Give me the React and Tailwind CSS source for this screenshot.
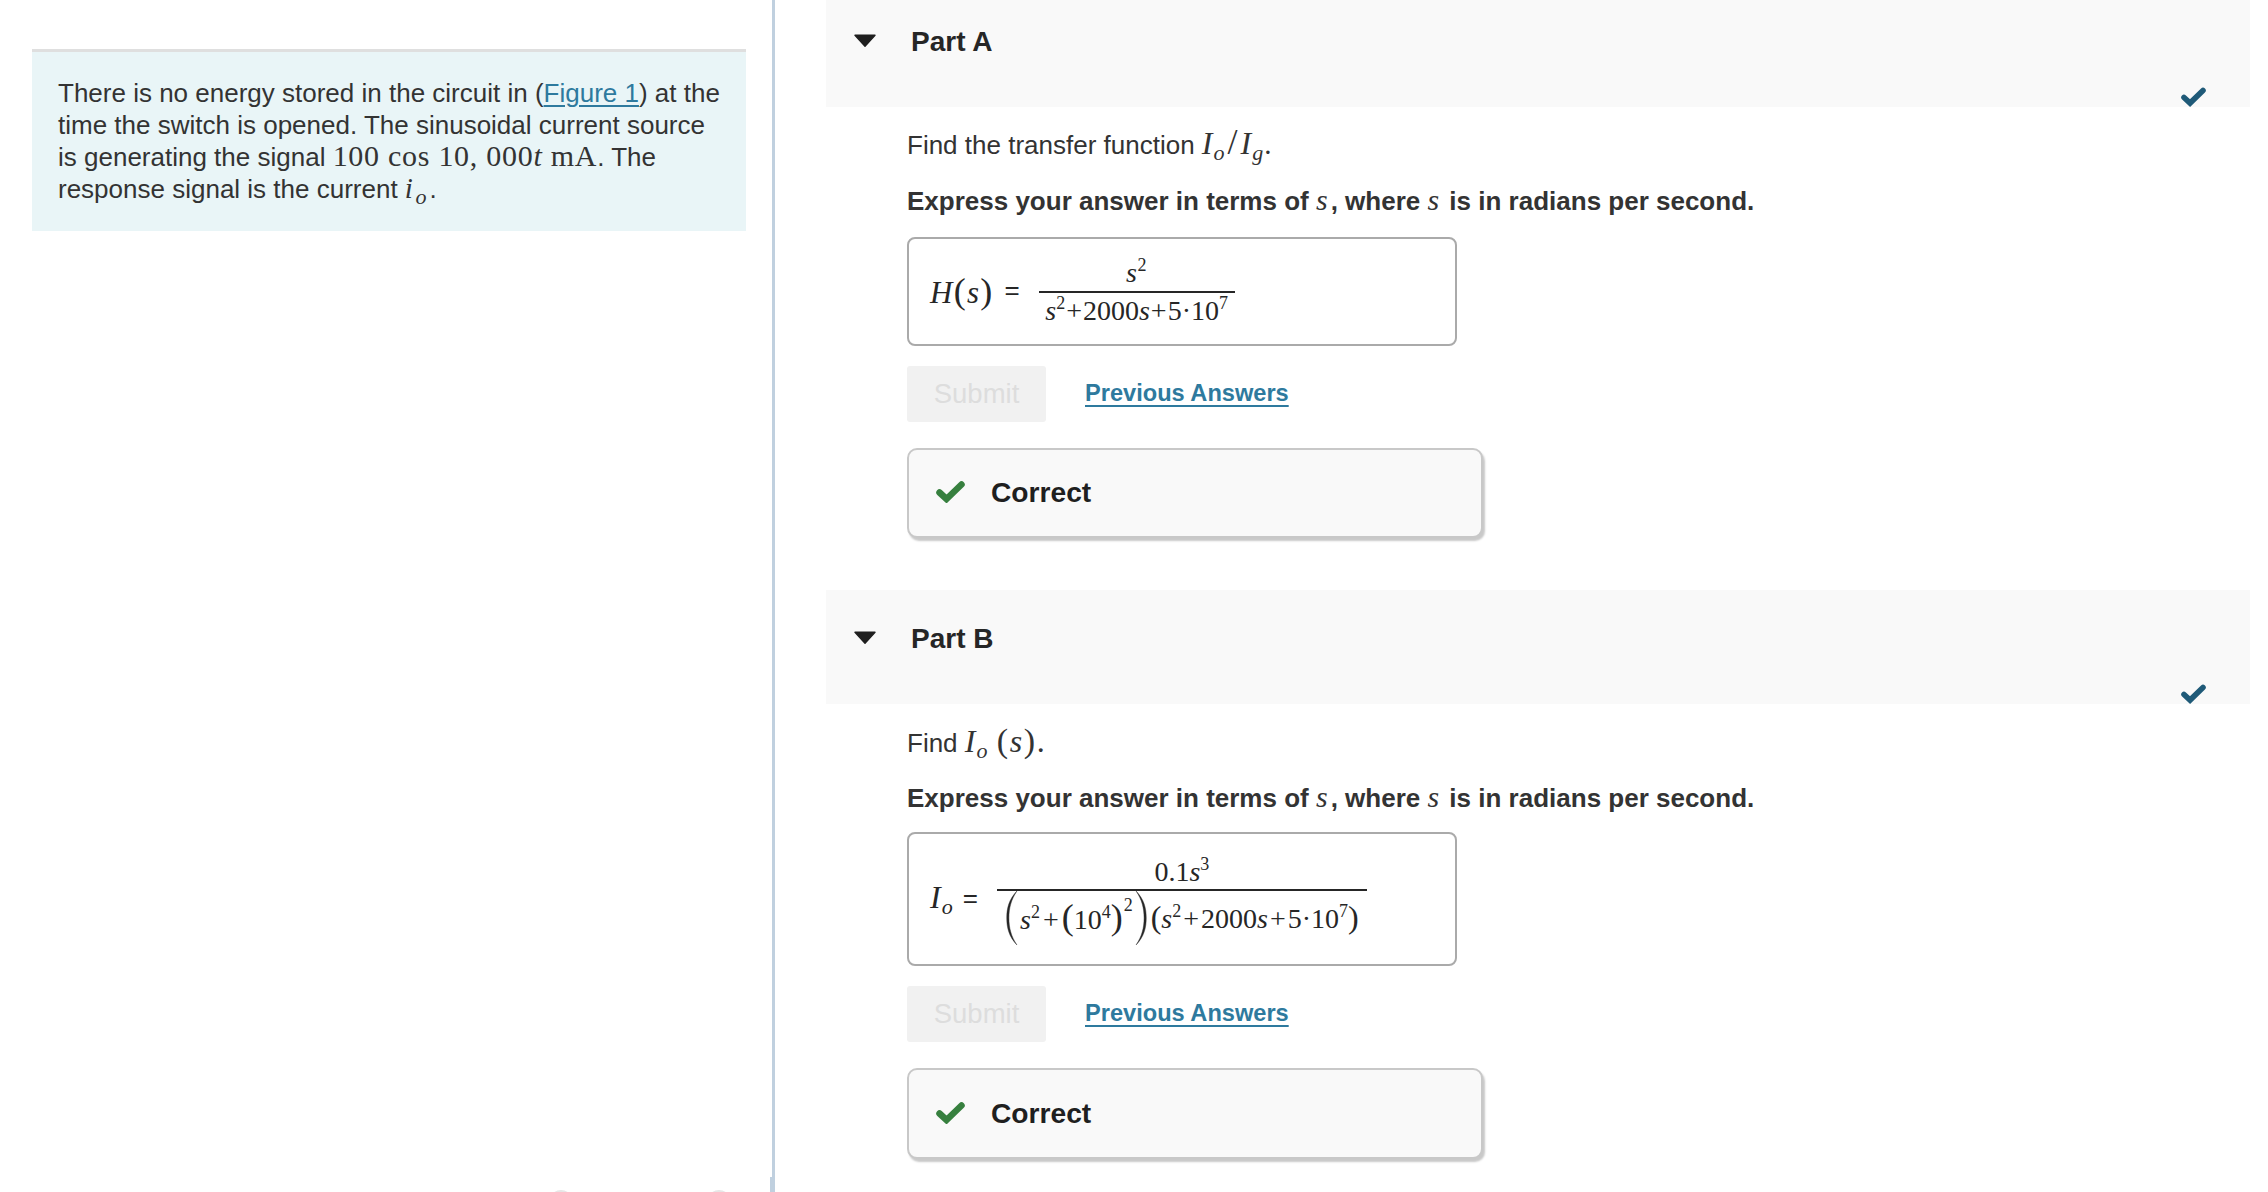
import React from "react";

const Serif = ({ children, className = "" }) => (
  <span className={`font-['Liberation_Serif',serif] leading-none ${className}`}>{children}</span>
);
const I = ({ children, className = "" }) => (
  <span className={`font-['Liberation_Serif',serif] italic leading-none ${className}`}>{children}</span>
);
const Sup = ({ children, className = "-top-[11px]" }) => (
  <span className={`relative text-[18px] leading-none ${className}`}>{children}</span>
);
const Sub = ({ children }) => (
  <span className="relative top-[6px] ml-[1px] text-[22px] leading-none italic">{children}</span>
);
const Plus = ({ className = "mx-[1px]" }) => <span className={className}>+</span>;

const Check = ({ className }) => (
  <svg viewBox="0 0 29 22" className={className} fill="none">
    <path d="M3.5 11.5 L10.5 18 L25.5 3.5" stroke="currentColor" strokeWidth="6.5" strokeLinejoin="miter" strokeLinecap="round" />
  </svg>
);

const Paren = ({ flip = false }) => (
  <svg viewBox="0 0 12 52" className={`w-[13px] h-[56px] shrink-0 ${flip ? "-scale-x-100" : ""}`} fill="none">
    <path d="M11 1 C3.5 9 1.6 17 1.6 26 C1.6 35 3.5 43 11 51 C5.6 43 3.6 35 3.6 26 C3.6 17 5.6 9 11 1 Z" fill="#262626" stroke="#262626" strokeWidth="0.4" />
  </svg>
);

function PartHeader({ title }) {
  return (
    <div className="relative h-[114px] bg-[#f9f9f9]">
      <div className="flex items-center pt-[31px] pl-[28px]">
        <svg width="22" height="13" viewBox="0 0 22 13" className="mr-[35px] -mt-[3px]">
          <path d="M1 1.2h20L11 12.2z" fill="#1f1f1f" stroke="#1f1f1f" strokeWidth="1.4" strokeLinejoin="round" />
        </svg>
        <span className="text-[28px] leading-[36px] font-bold text-[#262626]">{title}</span>
      </div>
      <Check className="absolute right-[44px] bottom-0 w-[25px] h-[20px] text-[#1f5a78]" />
    </div>
  );
}

function Actions({ tall = false }) {
  return (
    <>
      <div className="mt-[20px] flex items-center">
        <div className="w-[139px] h-[56px] rounded-[3px] bg-[#f1f1f1] flex items-center justify-center text-[27.5px] text-[#dddddd]">
          Submit
        </div>
        <a className="ml-[39px] text-[23.6px] font-bold text-[#2e7a9e] underline decoration-[2px] underline-offset-[4px] -mt-[1px]">
          Previous Answers
        </a>
      </div>
      <div className={`mt-[26px] w-[576px] ${tall ? "h-[91px]" : "h-[90px]"} rounded-[10px] border-2 border-[#c8c8c8] bg-[#f9f9f9] shadow-[2px_3px_2px_#c9c9c9] flex items-center pl-[27px]`}>
        <Check className="w-[29px] h-[22px] text-[#37803f] shrink-0 -mt-[2px]" />
        <span className="ml-[26px] text-[28.2px] font-bold text-[#1f1f1f] -mt-px">Correct</span>
      </div>
    </>
  );
}

function Prompt({ children }) {
  return (
    <>
      <p className="mt-[20px] h-[36px] text-[26px] leading-[36px] text-[#333333] whitespace-nowrap">{children}</p>
      <p className="mt-[20px] h-[36px] text-[26px] leading-[36px] font-bold text-[#333333] whitespace-nowrap">
        Express your answer in terms of <I className="font-normal text-[30px] tracking-[0.1em]">s</I>, where{" "}
        <I className="font-normal text-[30px] tracking-[0.1em]">s</I> is in radians per second.
      </p>
    </>
  );
}

export default function App() {
  return (
    <div className="relative flex h-[1192px] w-[2268px] overflow-hidden bg-white font-['Liberation_Sans',Arial,sans-serif] text-[#333333]">
      <div className="w-[775px] shrink-0 border-r-[3px] border-[#c0d0df] pl-[32px] pt-[49px]">
        <div className="w-[714px] h-[182px] border-t-[3px] border-[#dfdfdf] bg-[#e9f5f7] pl-[26px] pt-[25px] text-[26px] leading-[32px] text-[#333333] whitespace-nowrap">
          <div>
            There is no energy stored in the circuit in (
            <a className="text-[#2e7a9e] underline underline-offset-[3px]">Figure 1</a>) at the
          </div>
          <div>time the switch is opened. The sinusoidal current source</div>
          <div>
            is generating the signal <Serif className="text-[30px] tracking-[0.024em]">100 cos 10, 000<i>t</i> mA</Serif>. The
          </div>
          <div>
            response signal is the current <I className="text-[29px] tracking-[0.05em]">i</I>
            <Serif><Sub>o</Sub></Serif>
            <span className="ml-[3px]">.</span>
          </div>
        </div>
      </div>

      <div className="ml-[51px] w-[1424px] -mt-[7px]">
        <PartHeader title="Part A" />
        <div className="pl-[81px] pb-[52px]">
          <Prompt>
            Find the transfer function{" "}
            <I className="text-[32px]">
              I<Sub>o</Sub>
              <span className="mx-[3px] text-[36px] not-italic leading-[0]">/</span>I<Sub>g</Sub>
            </I>
            <Serif className="text-[29px] ml-[1px]">.</Serif>
          </Prompt>
          <div className="mt-[18px] w-[550px] h-[109px] rounded-[8px] border-2 border-[#aaaaaa] flex items-center pl-[21px] text-[#262626]">
            <span className="text-[31px] font-['Liberation_Serif',serif] tracking-[0.04em] whitespace-nowrap -mt-[2px]">
              <i>H</i>
              <span className="text-[36px] font-light">(</span>
              <i>s</i>
              <span className="text-[36px] font-light">)</span>
            </span>
            <span className="ml-[11px] text-[26px] -mt-[2px]">=</span>
            <div className="ml-[19px] flex flex-col items-center font-['Liberation_Serif',serif] text-[28px] leading-[36px]">
              <div className="h-[36px] tracking-[0.02em]"><i>s</i><Sup>2</Sup></div>
              <div className="w-[196px] border-t-2 border-[#262626] text-center whitespace-nowrap">
                <i>s</i><Sup>2</Sup><Plus />2000<i>s</i><Plus />5·10<Sup>7</Sup>
              </div>
            </div>
          </div>
          <Actions />
        </div>

        <PartHeader title="Part B" />
        <div className="pl-[81px]">
          <Prompt>
            Find{" "}
            <I className="text-[32px]">I<Sub>o</Sub></I>{" "}
            <Serif className="text-[32px] ml-[2px] tracking-[0.05em]">
              <span className="text-[34px]">(</span><i>s</i><span className="text-[34px]">)</span>.
            </Serif>
          </Prompt>
          <div className="mt-[16px] w-[550px] h-[134px] rounded-[8px] border-2 border-[#aaaaaa] flex items-center pl-[21px] text-[#262626]">
            <span className="text-[32px] font-['Liberation_Serif',serif] italic -mt-[4px] whitespace-nowrap">I<Sub>o</Sub></span>
            <span className="ml-[10px] text-[26px] -mt-[2px]">=</span>
            <div className="ml-[19px] flex flex-col items-center font-['Liberation_Serif',serif] text-[28px] leading-[34px] -mt-[2px]">
              <div className="h-[38px] pt-[4px]">0.1<i>s</i><Sup>3</Sup></div>
              <div className="w-[370px] h-[56px] border-t-2 border-[#262626] flex items-center justify-center whitespace-nowrap">
                <Paren />
                <span className="mx-[2px]">
                  <i>s</i><Sup>2</Sup><Plus className="mx-[3px]" /><span className="text-[36px] font-light">(</span>10<Sup>4</Sup><span className="text-[36px] font-light">)</span><Sup className="-top-[18px] ml-[1px]">2</Sup>
                </span>
                <Paren flip />
                <span className="ml-[3px]">
                  <span className="text-[32px]">(</span><i>s</i><Sup>2</Sup><Plus className="mx-[2px]" />2000<i>s</i><Plus className="mx-[2px]" />5·10<Sup>7</Sup><span className="text-[32px]">)</span>
                </span>
              </div>
            </div>
          </div>
          <Actions tall />
        </div>
      </div>

      <div className="absolute left-[770px] top-[1177px] h-[15px] w-[4px] bg-[#c0d0df]" />
      <div className="absolute left-[549px] top-[1190px] h-[24px] w-[24px] rounded-full bg-[#e6e6e6]" />
      <div className="absolute left-[707px] top-[1190px] h-[24px] w-[24px] rounded-full bg-[#e6e6e6]" />
    </div>
  );
}
